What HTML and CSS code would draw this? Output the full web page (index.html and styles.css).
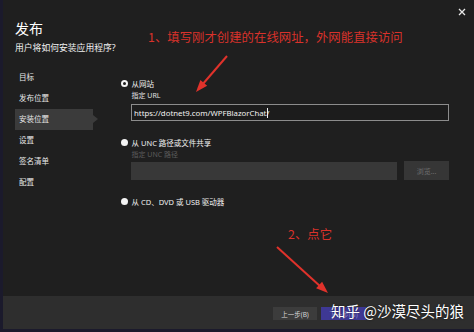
FILE: index.html
```html
<!DOCTYPE html>
<html>
<head>
    <meta charset="utf-8">
    <title>发布</title>
    <link rel="stylesheet" href="styles.css">
</head>
<body>
    <div class="window">
        <header class="head">
            <div class="titles">
                <h1>发布</h1>
                <p class="sub">用户将如何安装应用程序?</p>
            </div>
            <span class="close">
                <svg width="8" height="8" viewBox="0 0 8 8"><path d="M1 1L7 7M7 1L1 7" stroke="#e8e8e8" stroke-width="1.3"/></svg>
            </span>
        </header>

        <div class="main">
            <nav class="steps">
                <div class="step">目标</div>
                <div class="step">发布位置</div>
                <div class="step active">安装位置</div>
                <div class="step">设置</div>
                <div class="step">签名清单</div>
                <div class="step">配置</div>
            </nav>

            <section class="panel">
                <div class="option">
                    <span class="radio checked"></span>
                    <span>从网站</span>
                </div>
                <div class="field-label">指定 URL</div>
                <div class="input">https://dotnet9.com/WPFBlazorChat/<span class="caret"></span></div>

                <div class="option option-gap">
                    <span class="radio"></span>
                    <span>从 UNC 路径或文件共享</span>
                </div>
                <div class="field-label dim">指定 UNC 路径</div>
                <div class="input-row">
                    <div class="input disabled"></div>
                    <div class="browse">浏览...</div>
                </div>

                <div class="option option-gap">
                    <span class="radio"></span>
                    <span>从 CD、DVD 或 USB 驱动器</span>
                </div>
            </section>
        </div>

        <footer class="foot">
            <div class="btn">上一步(B)</div>
            <div class="btn primary">下一步(N)</div>
        </footer>
    </div>

    <!-- annotations drawn over the screenshot -->
    <div class="note note-1">1、填写刚才创建的在线网址，外网能直接访问</div>
    <div class="note note-2">2、点它</div>
    <svg class="arrows" width="474" height="332" viewBox="0 0 474 332">
        <line x1="227" y1="56" x2="202" y2="85" stroke="#e0322b" stroke-width="2"/>
        <polygon points="196,92 207.2,85.8 200.4,80" fill="#e0322b"/>
        <line x1="277" y1="247" x2="321" y2="287" stroke="#e0322b" stroke-width="2"/>
        <polygon points="328,293 316.1,288.3 322.1,281.7" fill="#e0322b"/>
    </svg>
    <div class="watermark">知乎 @沙漠尽头的狼</div>
</body>
</html>
```

FILE: styles.css
```css
* {
    margin: 0;
    padding: 0;
    box-sizing: border-box;
}

body {
    width: 474px;
    height: 332px;
    overflow: hidden;
    position: relative;
    background: #1b1a2c;
    font-family: "Noto Sans", "Noto Sans CJK SC", sans-serif;
    color: #e6e6e6;
}

.window {
    margin-left: 3px;
    width: 471px;
    height: 329px;
    background: #1f1f1f;
    display: flex;
    flex-direction: column;
}

.head {
    display: flex;
    justify-content: space-between;
    padding: 8px 8px 0 12px;
}

.titles {
    padding-top: 13px;
}

h1 {
    font-size: 14px;
    line-height: 16px;
    font-weight: 400;
    color: #ffffff;
}

.sub {
    margin-top: 6px;
    font-size: 8.8px;
    line-height: 11px;
    color: #f0f0f0;
}

.close {
    width: 8px;
    height: 8px;
    display: flex;
}

.main {
    flex: 1;
    display: flex;
    padding-top: 13px;
}

/* left step list */
.steps {
    margin-left: 12px;
    width: 78px;
}

.step {
    height: 21px;
    line-height: 21px;
    padding-left: 4px;
    font-size: 7.5px;
    color: #e8e8e8;
}

.step.active {
    position: relative;
    background: #3b3b3b;
}

.step.active::after {
    content: "";
    position: absolute;
    right: -5px;
    top: 6px;
    border-style: solid;
    border-width: 4.5px 0 4.5px 5px;
    border-color: transparent transparent transparent #3b3b3b;
}

/* right panel */
.panel {
    margin-left: 28px;
    width: 328px;
    padding-top: 10px;
}

.option {
    display: flex;
    align-items: center;
    gap: 3.5px;
    height: 12px;
    font-size: 7.5px;
    color: #f0f0f0;
}

.option-gap {
    margin-top: 15px;
}

.radio {
    width: 7px;
    height: 7px;
    border-radius: 50%;
    background: #f4f4f4;
    flex-shrink: 0;
}

.radio.checked {
    background: #1f1f1f;
    border: 2px solid #f4f4f4;
}

.field-label {
    margin-left: 10.5px;
    margin-top: 1px;
    height: 11px;
    line-height: 11px;
    font-size: 7px;
    color: #e0e0e0;
}

.field-label.dim {
    color: #5c5c5c;
}

.input {
    margin-left: 10px;
    margin-top: 3px;
    height: 17px;
    padding-left: 2px;
    display: flex;
    align-items: center;
    border: 1px solid #8c8c8c;
    background: #1c1c1c;
    font-size: 7.8px;
    color: #f2f2f2;
}

.caret {
    width: 1px;
    height: 10px;
    margin-left: -2px;
    background: #f2f2f2;
}

.input-row {
    display: flex;
    gap: 7px;
    margin-top: 1.5px;
}

.input-row .input {
    margin-top: 0;
    flex: 1;
}

.input.disabled {
    height: 18px;
    border: none;
    background: #383838;
}

.browse {
    width: 45px;
    height: 19px;
    margin-top: -0.5px;
    display: flex;
    align-items: center;
    justify-content: center;
    background: #363636;
    font-size: 7px;
    color: #6e6e6e;
}

/* footer */
.foot {
    height: 33px;
    background: #2e2e2e;
    display: flex;
    justify-content: flex-end;
    align-items: center;
    gap: 4px;
    padding-right: 108px;
    padding-top: 2px;
}

.btn {
    width: 44px;
    height: 13px;
    display: flex;
    align-items: center;
    justify-content: center;
    background: #3c3c3c;
    font-size: 6.5px;
    color: #d8d8d8;
}

.btn.primary {
    width: 45px;
    background: #3e3894;
    color: #8d88c4;
}

/* overlays */
.note {
    position: absolute;
    font-family: "Noto Sans CJK SC", sans-serif;
    font-size: 12.4px;
    line-height: 14px;
    color: #d9322b;
}

.note-1 {
    left: 148px;
    top: 30px;
}

.note-2 {
    left: 288px;
    top: 227px;
}

.arrows {
    position: absolute;
    left: 0;
    top: 0;
}

.watermark {
    position: absolute;
    left: 331px;
    top: 302px;
    font-family: "Noto Sans CJK SC", sans-serif;
    font-size: 14.5px;
    line-height: 17px;
    color: #ffffff;
    text-shadow: 0 0 2px rgba(0, 0, 0, 0.6);
    white-space: nowrap;
}
```
